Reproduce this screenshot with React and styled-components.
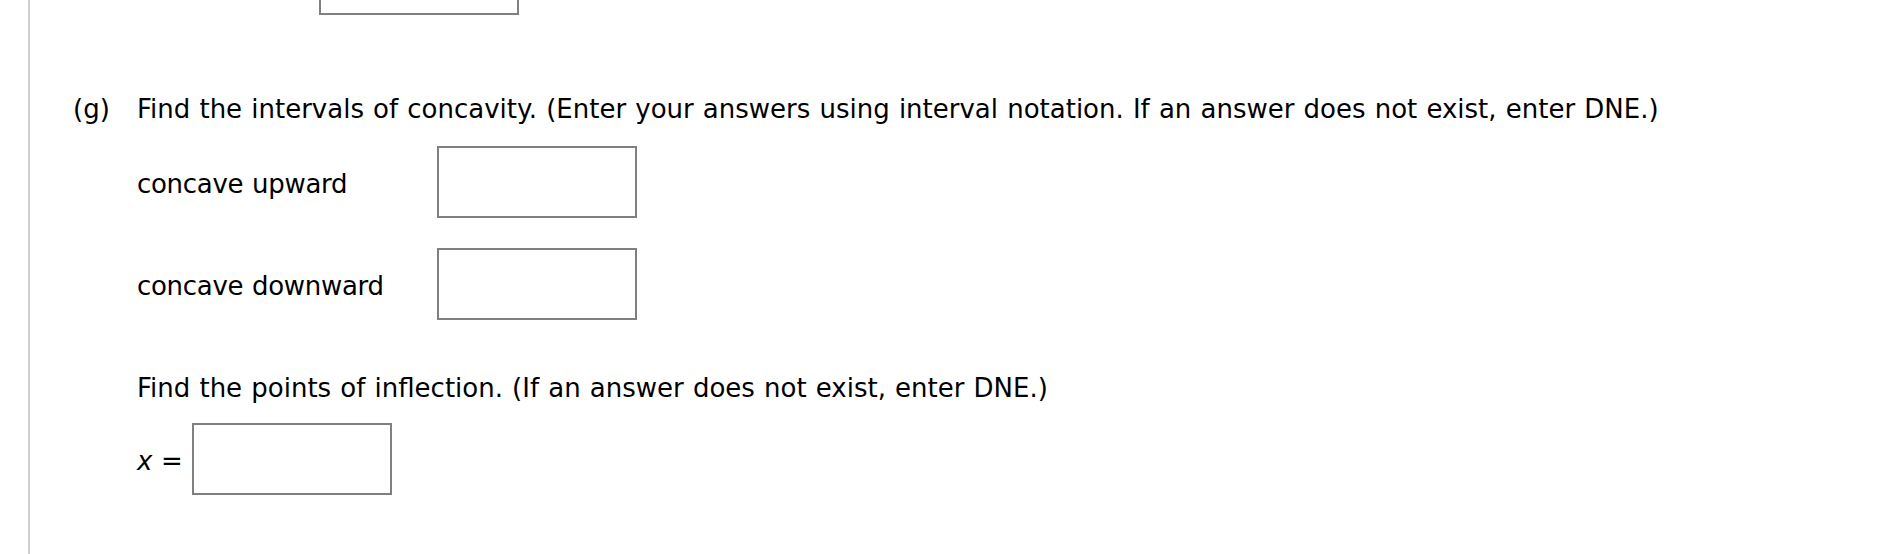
import styled, { createGlobalStyle } from 'styled-components'

const Global = createGlobalStyle`
  html, body {
    margin: 0;
    padding: 0;
    background: #fff;
    overflow: hidden;
  }
  body {
    font-family: "DejaVu Sans", Verdana, sans-serif;
    color: #000;
  }
`

const Page = styled.div`
  margin-left: 28px;
  height: 554px;
  border-left: 2px solid #cfcfcf;
  overflow: hidden;
`

const AnswerBox = styled.input`
  box-sizing: border-box;
  width: ${p => p.$width || 200}px;
  height: 72px;
  margin: 0;
  padding: 0 8px;
  border: 2px solid #808080;
  border-radius: 0;
  background: #fff;
  font: inherit;
  outline: none;
`

const Carry = styled.div`
  margin-top: -57px;
  padding-left: 289px;
`

const Part = styled.section`
  display: grid;
  grid-template-columns: 64px 1fr;
  margin-top: 79px;
  padding-left: 43px;
  font-size: 26px;
  line-height: 30px;
  word-spacing: 0.9px;
`

const PartLabel = styled.span``

const Body = styled.div`
  display: flex;
  flex-direction: column;
`

const Prompt = styled.p`
  margin: ${p => p.$top || 0}px 0 0;
  white-space: nowrap;
`

const AnswerRow = styled.div`
  display: flex;
  align-items: center;
  margin-top: ${p => p.$top || 0}px;
`

const RowLabel = styled.span`
  width: ${p => p.$width}px;
  flex: none;
  padding-top: 3px;
  letter-spacing: -0.3px;
  white-space: nowrap;
`

const Var = styled.i`
  font-style: italic;
`

export default function App() {
  return (
    <>
      <Global />
      <Page>
        <Carry>
          <AnswerBox aria-label="previous answer" />
        </Carry>
        <Part>
          <PartLabel>(g)</PartLabel>
          <Body>
            <Prompt>
              Find the intervals of concavity. (Enter your answers using interval notation. If an answer does not exist, enter DNE.)
            </Prompt>
            <AnswerRow $top={22}>
              <RowLabel $width={300}>concave upward</RowLabel>
              <AnswerBox aria-label="concave upward" />
            </AnswerRow>
            <AnswerRow $top={30}>
              <RowLabel $width={300}>concave downward</RowLabel>
              <AnswerBox aria-label="concave downward" />
            </AnswerRow>
            <Prompt $top={53}>
              Find the points of inflection. (If an answer does not exist, enter DNE.)
            </Prompt>
            <AnswerRow $top={20}>
              <RowLabel $width={55}>
                <Var>x</Var> =
              </RowLabel>
              <AnswerBox aria-label="x" />
            </AnswerRow>
          </Body>
        </Part>
      </Page>
    </>
  )
}
